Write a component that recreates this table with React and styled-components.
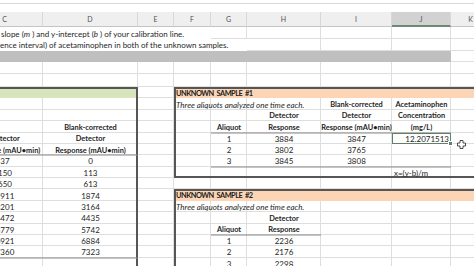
import React from 'react'
import styled, { createGlobalStyle } from 'styled-components'

const GlobalStyle = createGlobalStyle`
  html, body {
    margin: 0;
    padding: 0;
    background: #fff;
  }
`

// column widths C..K, sheet is scrolled so C starts off the left edge
const COLS = [76, 95, 36, 37, 36, 74, 71, 59, 40]
const LETTERS = ['C', 'D', 'E', 'F', 'G', 'H', 'I', 'J', 'K']
const ROW = 11.375
const ROWS = [15, 12, 11.5, 11.5, 12, 13, ...Array(17).fill(ROW)]

const Frame = styled.div`
  width: 474px;
  height: 266px;
  overflow: hidden;
  position: relative;
  background: #fff;
  font-family: Lato, 'Open Sans', sans-serif;
  color: #1e1e1e;
`

const FormulaEdge = styled.div`
  height: 3px;
  border-bottom: 1px solid #dadada;
  margin-bottom: 8px;
`

const Sheet = styled.div`
  display: grid;
  grid-template-columns: ${COLS.map(w => w + 'px').join(' ')};
  grid-template-rows: ${ROWS.map(h => h + 'px').join(' ')};
  margin-left: -33px;
  width: max-content;
`

const Slot = styled.div`
  grid-row: ${p => p.$r} / span ${p => p.$rs || 1};
  grid-column: ${p => p.$c} / span ${p => p.$cs || 1};
  box-sizing: border-box;
  min-width: 0;
`

const ColHead = styled(Slot)`
  display: flex;
  align-items: center;
  justify-content: center;
  font-size: 7px;
  color: #505050;
  background: ${p => (p.$active ? '#d2d2d2' : '#efefef')};
  border-right: 1px solid #d8d8d8;
  border-bottom: ${p => (p.$active ? '2px solid #6b8a76' : '1px solid #c4c4c4')};
`

const GridCell = styled(Slot)`
  border-right: 1px solid #dedede;
  border-bottom: 1px solid #dedede;
`

const Fill = styled(Slot)`
  background: ${p => p.$bg};
`

const Box = styled(Slot)`
  border: 2px solid #565656;
`

const Rule = styled(Slot)`
  align-self: end;
  height: 1px;
  background: ${p => p.$color || '#8a8a8a'};
  transform: translateY(0.5px);
`

const Selected = styled(Slot)`
  position: relative;
  border: 1.5px solid #5f8069;

  &::after {
    content: '';
    position: absolute;
    right: -3px;
    bottom: -3px;
    width: 3px;
    height: 3px;
    background: #5f8069;
    border: 1px solid #fff;
  }
`

const Text = styled(Slot)`
  display: flex;
  align-items: center;
  justify-content: ${p =>
    p.$align === 'left' ? 'flex-start' : p.$align === 'right' ? 'flex-end' : 'center'};
  padding: 1px 2px 0 ${p => (p.$indent != null ? p.$indent : 2)}px;
  font-size: ${p => (p.$bold ? 7.4 : 8)}px;
  font-weight: ${p => (p.$bold ? 700 : 400)};
  font-style: ${p => (p.$italic ? 'italic' : 'normal')};
  letter-spacing: ${p => (p.$caps ? '-0.5px' : 'normal')};
  word-spacing: ${p => (p.$caps ? '1.5px' : 'normal')};
  white-space: pre;
  background: ${p => p.$bg || 'transparent'};
`

const Cursor = styled.svg`
  position: absolute;
  left: 457px;
  top: 140px;
  width: 9px;
  height: 9px;
`

const calibration = [
  ['37', '0'],
  ['150', '113'],
  ['650', '613'],
  ['1911', '1874'],
  ['3201', '3164'],
  ['4472', '4435'],
  ['5779', '5742'],
  ['6921', '6884'],
  ['7360', '7323'],
]

const sample1 = [
  ['1', '3884', '3847'],
  ['2', '3802', '3765'],
  ['3', '3845', '3808'],
]

const sample2 = [
  ['1', '2236'],
  ['2', '2176'],
  ['3', '2298'],
]

export default function App() {
  const cells = []
  for (let r = 2; r <= ROWS.length; r++) {
    for (let c = 1; c <= COLS.length; c++) {
      cells.push(<GridCell key={`g${r}-${c}`} $r={r} $c={c} />)
    }
  }

  return (
    <Frame>
      <GlobalStyle />
      <FormulaEdge />
      <Sheet>
        {LETTERS.map((l, i) => (
          <ColHead key={l} $r={1} $c={i + 1} $active={l === 'J'}>
            {l}
          </ColHead>
        ))}
        {cells}

        {/* instructions that spill over from the left */}
        <Text $r={2} $c={1} $cs={4} $align="left" $indent={34} $bg="#fff">
          slope (<i>m</i> ) and y-intercept (<i>b</i> ) of your calibration line.
        </Text>
        <Text $r={3} $c={1} $cs={5} $align="left" $indent={33} $bg="#fff">
          ence interval) of acetaminophen in both of the unknown samples.
        </Text>
        <Fill $r={4} $c={1} $cs={8} $bg="#bfbfbf" />

        {/* calibration table */}
        <Fill $r={7} $c={1} $cs={2} $bg="#d8e4bc" />
        <Box $r={7} $c={1} $cs={2} $rs={17} />
        <Text $r={10} $c={2} $bold>Blank-corrected</Text>
        <Text $r={11} $c={1} $bold>Detector</Text>
        <Text $r={11} $c={2} $bold>Detector</Text>
        <Text $r={12} $c={1} $bold>Response (mAU•min)</Text>
        <Text $r={12} $c={2} $bold>Response (mAU•min)</Text>
        <Rule $r={12} $c={1} $cs={2} />
        {calibration.map(([raw, net], i) => (
          <React.Fragment key={raw}>
            <Text $r={13 + i} $c={1}>{raw}</Text>
            <Text $r={13 + i} $c={2}>{net}</Text>
          </React.Fragment>
        ))}
        <Rule $r={21} $c={1} $cs={2} />

        {/* unknown sample 1 */}
        <Fill $r={7} $c={4} $cs={6} $bg="#fbd5b5" />
        <Box $r={7} $c={4} $cs={6} $rs={8} />
        <Text $r={7} $c={4} $cs={4} $align="left" $bold $caps>UNKNOWN SAMPLE #1</Text>
        <Text $r={8} $c={4} $cs={4} $align="left" $italic>Three aliquots analyzed one time each.</Text>
        <Text $r={8} $c={7} $bold>Blank-corrected</Text>
        <Text $r={8} $c={8} $bold>Acetaminophen</Text>
        <Text $r={9} $c={6} $bold>Detector</Text>
        <Text $r={9} $c={7} $bold>Detector</Text>
        <Text $r={9} $c={8} $bold>Concentration</Text>
        <Text $r={10} $c={5} $bold>Aliquot</Text>
        <Text $r={10} $c={6} $bold>Response</Text>
        <Text $r={10} $c={7} $bold>Response (mAU•min)</Text>
        <Text $r={10} $c={8} $bold>(mg/L)</Text>
        <Rule $r={10} $c={5} $cs={4} />
        {sample1.map(([n, raw, net], i) => (
          <React.Fragment key={n}>
            <Text $r={11 + i} $c={5}>{n}</Text>
            <Text $r={11 + i} $c={6}>{raw}</Text>
            <Text $r={11 + i} $c={7}>{net}</Text>
          </React.Fragment>
        ))}
        <Text $r={11} $c={8} $align="right">12.2071513</Text>
        <Selected $r={11} $c={8} />
        <Rule $r={13} $c={5} $cs={4} />
        <Text $r={14} $c={8} $align="left">x=(y-b)/m</Text>

        {/* unknown sample 2 */}
        <Fill $r={16} $c={4} $cs={6} $bg="#fbd5b5" />
        <Box $r={16} $c={4} $cs={6} $rs={8} />
        <Text $r={16} $c={4} $cs={4} $align="left" $bold $caps>UNKNOWN SAMPLE #2</Text>
        <Text $r={17} $c={4} $cs={4} $align="left" $italic>Three aliquots analyzed one time each.</Text>
        <Text $r={18} $c={6} $bold>Detector</Text>
        <Text $r={19} $c={5} $bold>Aliquot</Text>
        <Text $r={19} $c={6} $bold>Response</Text>
        <Rule $r={19} $c={5} $cs={2} />
        {sample2.map(([n, raw], i) => (
          <React.Fragment key={n}>
            <Text $r={20 + i} $c={5}>{n}</Text>
            <Text $r={20 + i} $c={6}>{raw}</Text>
          </React.Fragment>
        ))}
      </Sheet>

      {/* excel's fat cross pointer */}
      <Cursor viewBox="0 0 9 9">
        <path
          d="M3 0.5 H6 V3 H8.5 V6 H6 V8.5 H3 V6 H0.5 V3 H3 Z"
          fill="#fff"
          stroke="#222"
          strokeWidth="0.8"
        />
      </Cursor>
    </Frame>
  )
}
